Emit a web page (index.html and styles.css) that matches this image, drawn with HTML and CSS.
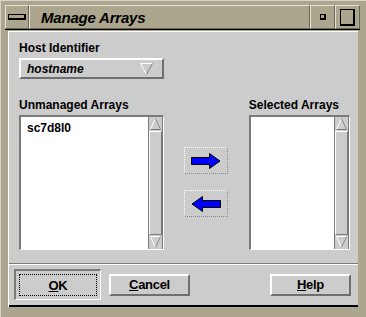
FILE: index.html
```html
<!DOCTYPE html>
<html lang="en">
<head>
    <meta charset="UTF-8">
    <title>Manage Arrays</title>
    <link rel="stylesheet" href="styles.css">
</head>
<body>

    <div class="frame">
        <!-- Window title bar -->
        <div class="titlebar">
            <div class="tb-btn menu-btn"><span class="menu-bar"></span></div>
            <div class="tb-title">Manage Arrays</div>
            <div class="tb-btn min-btn"><span class="min-dot"></span></div>
            <div class="tb-btn max-btn"><span class="max-box"></span></div>
        </div>

        <div class="client">
            <div class="form">
                <div class="label">Host Identifier</div>
                <div class="option-menu">
                    <span>hostname</span>
                    <svg width="13" height="12" viewBox="0 0 13 12">
                        <path d="M0.5 0.5 H12.5 L6.5 11.5 Z" fill="#cccccc" stroke="#ffffff"/>
                        <path d="M12.5 0.5 L6.5 11.5" stroke="#6e6e6e" fill="none"/>
                    </svg>
                </div>

                <div class="lists">
                    <div class="col-left">
                        <div class="label">Unmanaged Arrays</div>
                        <div class="listbox">
                            <div class="items">
                                <div class="item">sc7d8l0</div>
                            </div>
                            <div class="scrollbar">
                                <svg class="sb-arrow" width="13" height="14" viewBox="0 0 13 14">
                                    <path d="M1.5 12.5 L6.5 1.5 L11.5 12.5 Z" fill="#cccccc" stroke="#ffffff"/>
                                    <path d="M6.5 1.5 L11.5 12.5 H1.5" stroke="#7a7a7a" fill="none"/>
                                </svg>
                                <div class="sb-track"></div>
                                <svg class="sb-arrow" width="13" height="14" viewBox="0 0 13 14">
                                    <path d="M1.5 1.5 H11.5 L6.5 12.5 Z" fill="#cccccc" stroke="#ffffff"/>
                                    <path d="M11.5 1.5 L6.5 12.5" stroke="#7a7a7a" fill="none"/>
                                </svg>
                            </div>
                        </div>
                    </div>

                    <div class="col-mid">
                        <div class="arrow-btn">
                            <svg width="30" height="16" viewBox="0 0 30 16">
                                <path d="M0.5 4.5 H18.5 V0.5 L29 8 L18.5 15.5 V11.5 H0.5 Z" fill="#0000ff" stroke="#000" stroke-width="1"/>
                            </svg>
                        </div>
                        <div class="arrow-btn">
                            <svg width="30" height="16" viewBox="0 0 30 16">
                                <path d="M29.5 4.5 H11.5 V0.5 L1 8 L11.5 15.5 V11.5 H29.5 Z" fill="#0000ff" stroke="#000" stroke-width="1"/>
                            </svg>
                        </div>
                    </div>

                    <div class="col-right">
                        <div class="label">Selected Arrays</div>
                        <div class="listbox">
                            <div class="items"></div>
                            <div class="scrollbar">
                                <svg class="sb-arrow" width="13" height="14" viewBox="0 0 13 14">
                                    <path d="M1.5 12.5 L6.5 1.5 L11.5 12.5 Z" fill="#cccccc" stroke="#ffffff"/>
                                    <path d="M6.5 1.5 L11.5 12.5 H1.5" stroke="#7a7a7a" fill="none"/>
                                </svg>
                                <div class="sb-track"></div>
                                <svg class="sb-arrow" width="13" height="14" viewBox="0 0 13 14">
                                    <path d="M1.5 1.5 H11.5 L6.5 12.5 Z" fill="#cccccc" stroke="#ffffff"/>
                                    <path d="M11.5 1.5 L6.5 12.5" stroke="#7a7a7a" fill="none"/>
                                </svg>
                            </div>
                        </div>
                    </div>
                </div>
            </div>

            <!-- Action area -->
            <div class="actions">
                <div class="default-ring">
                    <div class="btn focused"><u>O</u>K</div>
                </div>
                <div class="btn"><u>C</u>ancel</div>
                <div class="spacer"></div>
                <div class="btn"><u>H</u>elp</div>
            </div>
        </div>
    </div>

</body>
</html>
```

FILE: styles.css
```css
body {
    margin: 0;
    padding: 0;
    font-family: "Liberation Sans", Arial, sans-serif;
    font-size: 12px;
    font-weight: bold;
    color: #000;
}

/* Window frame */
.frame {
    width: 366px;
    height: 317px;
    box-sizing: border-box;
    background: #aca68e;
    padding: 4px 8px 10px 7px;
    display: flex;
    flex-direction: column;
    border-left: 1px solid #d8d4c4;
    border-top: 1px solid #d8d4c4;
}

.titlebar {
    height: 24px;
    display: flex;
    margin-left: -3px;
    margin-right: -2px;
    border-bottom: 1px solid #000;
}

.tb-btn, .tb-title {
    box-sizing: border-box;
    border-top: 1px solid #e6e2d4;
    border-left: 1px solid #e6e2d4;
    border-right: 1px solid #6a6552;
    border-bottom: 1px solid #6a6552;
    display: flex;
    align-items: center;
    justify-content: center;
}

.menu-btn {
    width: 24px;
}

.menu-bar {
    width: 15px;
    height: 3px;
    border: 1px solid #000;
    border-right-width: 2px;
    border-bottom-width: 2px;
    background: #aca68e;
}

.tb-title {
    flex: 1;
    justify-content: flex-start;
    padding-left: 11px;
    font-size: 15px;
    font-style: italic;
    letter-spacing: -0.2px;
}

.min-btn {
    width: 25px;
}

.min-dot {
    width: 3px;
    height: 3px;
    border: 1px solid #000;
    border-right-width: 2px;
    border-bottom-width: 2px;
}

.max-btn {
    width: 25px;
}

.max-box {
    width: 12px;
    height: 14px;
    border: 1px solid #000;
    border-right-width: 2px;
    border-bottom-width: 2px;
}

/* Client area */
.client {
    flex: 1;
    background: #cccccc;
    border-top: 1px solid #ffffff;
    border-left: 1px solid #ffffff;
    display: flex;
    flex-direction: column;
    margin-top: 1px;
}

.form {
    padding: 9px 8px 0 10px;
}

.label {
    height: 14px;
    line-height: 14px;
    margin-bottom: 3px;
}

.option-menu {
    width: 145px;
    height: 21px;
    box-sizing: border-box;
    border-top: 2px solid #ffffff;
    border-left: 2px solid #ffffff;
    border-right: 2px solid #6e6e6e;
    border-bottom: 2px solid #6e6e6e;
    display: flex;
    align-items: center;
    justify-content: space-between;
    padding: 0 9px 0 6px;
    font-style: italic;
}

.lists {
    display: flex;
    margin-top: 19px;
}

.col-left {
    width: 146px;
}

.col-mid {
    width: 44px;
    margin-left: 20px;
    margin-right: 21px;
    padding-top: 49px;
    display: flex;
    flex-direction: column;
    gap: 16px;
}

.col-right {
    width: 102px;
}

.listbox {
    height: 135px;
    box-sizing: border-box;
    border-top: 2px solid #7a7a7a;
    border-left: 2px solid #7a7a7a;
    border-right: 1px solid #ffffff;
    border-bottom: 1px solid #ffffff;
    display: flex;
}

.items {
    flex: 1;
    background: #ffffff;
    padding: 4px 6px;
}

.item {
    height: 14px;
    line-height: 14px;
}

.scrollbar {
    width: 15px;
    background: #cccccc;
    display: flex;
    flex-direction: column;
    box-sizing: border-box;
    border-left: 1px solid #7a7a7a;
    border-right: 1px solid #7a7a7a;
}

.sb-arrow {
    display: block;
    flex: none;
}

.sb-track {
    flex: 1;
    border-top: 1px solid #ffffff;
    border-left: 1px solid #ffffff;
    border-right: 1px solid #7a7a7a;
    border-bottom: 1px solid #7a7a7a;
}

.arrow-btn {
    height: 27px;
    box-sizing: border-box;
    border: 1px dotted #8a8a8a;
    border-top-color: #ffffff;
    border-left-color: #ffffff;
    display: flex;
    align-items: center;
    justify-content: center;
}

/* Bottom action area */
.actions {
    margin-top: auto;
    height: 41px;
    border-top: 1px solid #7a7a7a;
    box-shadow: inset 0 1px 0 #ffffff;
    border-bottom: 2px solid #000;
    display: flex;
    align-items: center;
    padding: 0 7px 0 5px;
    gap: 8px;
}

.default-ring {
    padding: 3px;
    border-top: 2px solid #7a7a7a;
    border-left: 2px solid #7a7a7a;
    border-right: 1px solid #ffffff;
    border-bottom: 1px solid #ffffff;
}

.btn {
    width: 81px;
    height: 22px;
    box-sizing: border-box;
    border-top: 2px solid #ffffff;
    border-left: 2px solid #ffffff;
    border-right: 2px solid #6e6e6e;
    border-bottom: 2px solid #6e6e6e;
    display: flex;
    align-items: center;
    justify-content: center;
    font-size: 13px;
    letter-spacing: -0.3px;
}

.btn.focused {
    width: 78px;
    border: 1px dotted #000;
    outline: 1px solid #cccccc;
}

.spacer {
    flex: 1;
}
```
